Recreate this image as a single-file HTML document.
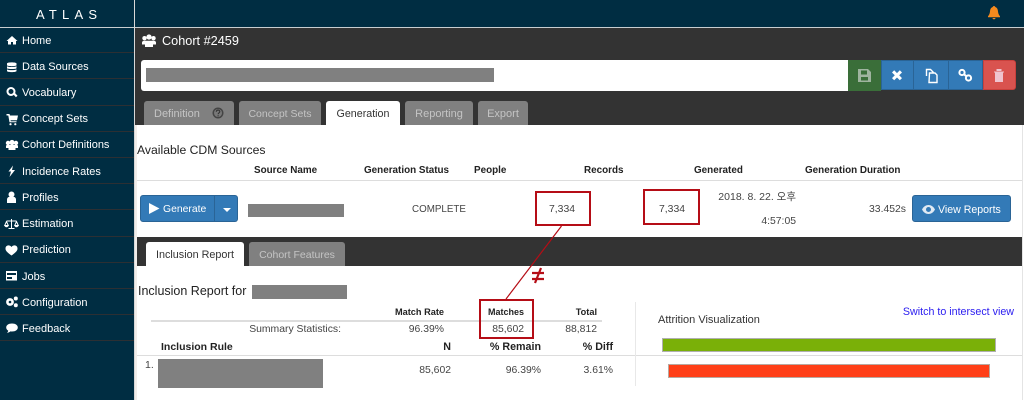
<!DOCTYPE html>
<html><head><meta charset="utf-8">
<style>
html,body{margin:0;padding:0;width:1024px;height:400px;overflow:hidden;background:#fff}
body{position:relative;font-family:"Liberation Sans","Noto Sans CJK KR",sans-serif;font-size:10.4px;color:#333}
.a{position:absolute;white-space:nowrap;line-height:14px}
.b{position:absolute}
.nav{position:absolute;left:22px;color:#fff;font-size:11px;line-height:14px;white-space:nowrap}
.ic{position:absolute}
.sep{position:absolute;left:0;width:134px;height:1px;background:#2c2f33}
.tab{position:absolute;top:101px;height:24px;background:#808080;border-radius:3px 3px 0 0;color:#c4c4c4;font-size:10.5px;line-height:26px;text-align:center}
.g{position:absolute;background:#808080}
.th{position:absolute;white-space:nowrap;font-weight:bold;font-size:9.900px;line-height:14px;color:#222}
.r{text-align:right}
.red{position:absolute;border:2px solid #b50d16;box-sizing:border-box}
</style></head><body>
<div class="b" style="left:0;top:0;width:1024px;height:27px;background:#002d42"></div>
<div class="b" style="left:0;top:27px;width:1024px;height:1px;background:#c8cdd0"></div>
<div class="b" style="left:0;top:28px;width:134px;height:372px;background:#002d42"></div>
<div class="b" style="left:134px;top:0;width:1px;height:400px;background:#d8d8d8"></div>
<div class="b" style="left:135px;top:125px;width:2px;height:275px;background:#f1edea"></div>
<div class="b" style="left:1022px;top:125px;width:1px;height:275px;background:#e4e4e4"></div>
<div class="a" style="left:36px;top:8px;color:#fff;font-size:13px;letter-spacing:5.2px">ATLAS</div>
<svg class="ic" style="left:987px;top:5px" width="14" height="15" viewBox="0 0 14 15"><path d="M7 1c.8 0 1.200.5 1.200 1C10 2.600 10.800 4 11 6.500c.2 2 .8 3.500 2 4.700v1H1v-1c1.200-1.200 1.800-2.700 2-4.700C3.200 4 4 2.600 5.800 2c0-.5.400-1 1.200-1zM5.500 13h3c0 .8-.7 1.300-1.500 1.300S5.500 13.800 5.500 13z" fill="#f68a1e"/></svg>

<div class="sep" style="top:52px"></div><div class="sep" style="top:78px"></div><div class="sep" style="top:105px"></div><div class="sep" style="top:131px"></div><div class="sep" style="top:157px"></div><div class="sep" style="top:183px"></div><div class="sep" style="top:209px"></div><div class="sep" style="top:236px"></div><div class="sep" style="top:262px"></div><div class="sep" style="top:288px"></div><div class="sep" style="top:314px"></div><div class="sep" style="top:340px"></div>

<div class="nav" style="top:34px">Home</div>
<div class="nav" style="top:60px">Data Sources</div>
<div class="nav" style="top:86px">Vocabulary</div>
<div class="nav" style="top:112px">Concept Sets</div>
<div class="nav" style="top:138px">Cohort Definitions</div>
<div class="nav" style="top:165px">Incidence Rates</div>
<div class="nav" style="top:191px">Profiles</div>
<div class="nav" style="top:217px">Estimation</div>
<div class="nav" style="top:243px">Prediction</div>
<div class="nav" style="top:270px">Jobs</div>
<div class="nav" style="top:296px">Configuration</div>
<div class="nav" style="top:322px">Feedback</div>

<svg class="ic" style="left:0;top:0" width="22" height="340" viewBox="0 0 22 340" fill="#fff">
<path d="M12 36l5.500 5h-1.500v3.500h-3V42h-2v2.500H8V41H6.500z"/>
<path d="M7 63.500c0-1.500 9.500-1.500 9.500 0v1.800c0 1.200-9.500 1.200-9.500 0zM7 66.300c2 1 7.500 1 9.500 0v2c0 1-9.500 1-9.500 0zM7 69.400c2 1 7.500 1 9.500 0V71c0 1.500-9.500 1.500-9.500 0z"/>
<path fill-rule="evenodd" d="M11 87a4.500 4.500 0 1 1 0 9 4.500 4.500 0 0 1 0-9zm0 2a2.500 2.500 0 1 0 0 5 2.500 2.500 0 0 0 0-5z"/><path d="M13.500 94.500l1.500-1.500 2.500 2.800-1.600 1.500z"/>
<path d="M6.500 114H9.500l.5 1.500H18l-1 4.800H10.500l.3 1H16.500v1h-7L8.300 115.500H6.500z"/><circle cx="10.500" cy="124.200" r="1.100"/><circle cx="15.300" cy="124.200" r="1.100"/>
<circle cx="8" cy="143" r="2.200"/><circle cx="12" cy="142.500" r="2.600"/><circle cx="16" cy="143" r="2.200"/><path d="M6 146c0-.9.900-1 1.500-1h9c.6 0 1.500.1 1.500 1v2h-2.500v2h-7v-2H6z"/>
<path d="M13 165.500l-4.500 6h2.500L9.500 177l5.500-7h-3z"/>
<circle cx="11.500" cy="194.500" r="3"/><path d="M7 203v-3.500c0-1.500 1-2.500 2-2.500h5c1 0 2 1 2 2.500v3.500z"/>
<path d="M11 219h1v1.500h4v1h-4v6.500h2.500v1H8.500v-1H11v-6.500H7v-1h4z"/><path d="M6.500 221.500l-1.800 4h3.600zM16.500 221.500l-1.800 4h3.600z" fill="none" stroke="#fff"/><path d="M4.500 225.500h4c0 2.300-4 2.300-4 0zM14.500 225.500h4c0 2.300-4 2.300-4 0z"/>
<path d="M11.500 255.500c-5-3.500-6-5-6-7 0-3.500 4.200-4.200 6-1.500 1.800-2.700 6-2 6 1.500 0 2-1 3.500-6 7z"/>
<path fill-rule="evenodd" d="M6 271h11v9.500H6zM7 273v2h9v-2zM7 277v2h5v-2z"/>
<circle cx="10" cy="302" r="3.900"/><circle cx="10" cy="302" r="1.300" fill="#002d42"/><circle cx="15.800" cy="298.500" r="2"/><circle cx="15.800" cy="305.300" r="2"/>
<path d="M12 323.500c3.500 0 5.800 1.700 5.800 4S15.500 331.500 12 331.500c-.6 0-1.100 0-1.600-.1-1 .9-2.300 1.400-3.400 1.500.7-.7 1.100-1.400 1.200-2.300-1.300-.7-2-1.800-2-3.100 0-2.300 2.300-4 5.800-4z"/>
</svg>

<div class="b" style="left:135px;top:28px;width:889px;height:97px;background:#333"></div>
<svg class="ic" style="left:141px;top:33px" width="16" height="16" viewBox="0 0 16 16" fill="#fff"><circle cx="3.500" cy="5.200" r="2.200"/><circle cx="8" cy="4" r="2.600"/><circle cx="12.500" cy="5.200" r="2.200"/><path d="M1 9.500c0-1 1-1.800 2-1.800h10c1 0 2 .8 2 1.800v2H12v2.500H4v-2.500H1z"/></svg>
<div class="a" style="left:162px;top:34px;color:#fff;font-size:12.700px">Cohort #2459</div>

<div class="b" style="left:141px;top:60px;width:707px;height:31px;background:#fff;border-radius:3px 0 0 3px"></div>
<div class="g" style="left:146px;top:68px;width:348px;height:14px"></div>
<div class="b" style="left:848px;top:60px;width:33px;height:31px;background:#3a6e39"></div>
<div class="b" style="left:881px;top:60px;width:33px;height:30px;background:#337ab7;border:1px solid #2a6496;box-sizing:border-box"></div>
<div class="b" style="left:914px;top:60px;width:35px;height:30px;background:#337ab7;border:1px solid #2a6496;box-sizing:border-box;border-left:0"></div>
<div class="b" style="left:949px;top:60px;width:34px;height:30px;background:#337ab7;border:1px solid #2a6496;box-sizing:border-box;border-left:0"></div>
<div class="b" style="left:983px;top:60px;width:33px;height:30px;background:#d9534f;border:1px solid #c9403c;box-sizing:border-box;border-radius:0 3px 3px 0"></div>
<svg class="ic" style="left:848px;top:60px" width="168" height="31" viewBox="0 0 168 31">
<path fill-rule="evenodd" d="M10 9h10l3 3v10H10zM13 10.500v4h6v-4zM13 17v3.500h7V17z" fill="#9fb49f"/>
<path d="M44 11.500l2.200-2.200 2.800 2.800 2.800-2.800 2.200 2.200-2.800 2.800 2.800 2.800-2.200 2.200-2.800-2.800-2.800 2.800L44 17.100l2.800-2.800z" transform="translate(0 1)" fill="#fff"/>
<path d="M78.500 16V9.500h4l3 3M81.500 13h5.500l2 2v7.500h-8z" fill="none" stroke="#fff" stroke-width="1.400"/>
<circle cx="114" cy="12.500" r="2.600" fill="none" stroke="#fff" stroke-width="2"/><circle cx="120.500" cy="18" r="2.600" fill="none" stroke="#fff" stroke-width="2"/><path d="M116 14.300l2.500 2" stroke="#fff" stroke-width="2"/>
<path d="M146 11.500h10v1h-1v9.500h-8v-9.500h-1zM148.500 9h5v2h-5z" fill="#efc4cf"/>
</svg>

<div class="tab" style="left:144px;top:101px;width:90px;text-align:left;text-indent:10px;font-size:11px">Definition<svg style="position:absolute;left:68px;top:6px" width="12" height="12" viewBox="0 0 12 12"><circle cx="6" cy="6" r="5.500" fill="#444"/><circle cx="6" cy="6" r="4" fill="#777"/><path d="M4.300 4.800c0-2.300 3.500-2.300 3.500-.2 0 1.300-1.700 1.400-1.700 2.600M6.100 8.200v1.200" fill="none" stroke="#333" stroke-width="1.100"/></svg></div>
<div class="tab" style="left:239px;width:82px">Concept Sets</div>
<div class="tab" style="left:326px;width:74px;background:#fff;color:#333;font-size:10.700px">Generation</div>
<div class="tab" style="left:405px;width:68px;font-size:11px">Reporting</div>
<div class="tab" style="left:478px;width:50px;font-size:11px">Export</div>

<div class="a" style="left:137px;top:143px;font-size:12.200px;color:#222">Available CDM Sources</div>
<div class="th" style="left:254px;top:164px">Source Name</div>
<div class="th" style="left:364px;top:164px">Generation Status</div>
<div class="th" style="left:474px;top:164px">People</div>
<div class="th" style="left:584px;top:164px">Records</div>
<div class="th" style="left:694px;top:164px">Generated</div>
<div class="th" style="left:805px;top:164px">Generation Duration</div>
<div class="b" style="left:137px;top:180px;width:885px;height:1px;background:#ddd"></div>

<div class="b" style="left:140px;top:195px;width:75px;height:27px;background:#337ab7;border:1px solid #2a6496;box-sizing:border-box;border-radius:3px 0 0 3px"></div>
<div class="b" style="left:215px;top:195px;width:23px;height:27px;background:#337ab7;border:1px solid #2a6496;box-sizing:border-box;border-left:0;border-radius:0 3px 3px 0"></div>
<svg class="ic" style="left:149px;top:203px" width="11" height="11" viewBox="0 0 11 11"><path d="M0 0l10.500 5.500L0 11z" fill="#fff"/></svg>
<div class="a" style="left:163px;top:203px;color:#fff;font-size:10.400px">Generate</div>
<svg class="ic" style="left:223px;top:208px" width="8" height="4"><path d="M0 0h8L4 4z" fill="#fff"/></svg>
<div class="g" style="left:248px;top:204px;width:96px;height:13px"></div>
<div class="a" style="left:412px;top:203px;color:#444;font-size:9.800px">COMPLETE</div>
<div class="a" style="left:549px;top:203px;color:#444">7,334</div>
<div class="a" style="left:659px;top:203px;color:#444">7,334</div>
<div class="a r" style="left:700px;top:190px;width:96px;color:#444;font-size:10.500px">2018. 8. 22. 오후</div>
<div class="a r" style="left:740px;top:215px;width:56px;color:#444;font-size:10.400px">4:57:05</div>
<div class="a r" style="left:850px;top:203px;width:56px;color:#444">33.452s</div>
<div class="b" style="left:912px;top:195px;width:99px;height:27px;background:#337ab7;border:1px solid #2a6496;box-sizing:border-box;border-radius:3px"></div>
<svg class="ic" style="left:922px;top:205px" width="13" height="9" viewBox="0 0 13 9"><path fill-rule="evenodd" d="M0 4.500C1.500 1.500 4 0 6.500 0S11.500 1.500 13 4.500C11.500 7.500 9 9 6.500 9S1.500 7.500 0 4.500zM6.500 2a2.500 2.500 0 1 0 0 5 2.500 2.500 0 0 0 0-5z" fill="#dfe9f3"/></svg>
<div class="a" style="left:938px;top:203px;color:#fff;font-size:10.600px">View Reports</div>

<div class="b" style="left:137px;top:237px;width:885px;height:29px;background:#333"></div>
<div class="tab" style="left:146px;top:242px;width:98px;height:24px;background:#fff;color:#333;font-size:10.800px">Inclusion Report</div>
<div class="tab" style="left:249px;top:242px;width:96px;height:24px">Cohort Features</div>

<div class="a" style="left:138px;top:284px;font-size:12.500px;color:#222">Inclusion Report for</div>
<div class="g" style="left:252px;top:285px;width:95px;height:14px"></div>
<div class="th r" style="left:380px;top:305px;width:64px;font-size:9.200px">Match Rate</div>
<div class="th r" style="left:470px;top:305px;width:54px;font-size:9px">Matches</div>
<div class="th r" style="left:550px;top:305px;width:47px;font-size:9.200px">Total</div>
<div class="b" style="left:151px;top:320px;width:451px;height:2px;background:#ddd"></div>
<div class="a r" style="left:220px;top:323px;width:121px;color:#444">Summary Statistics:</div>
<div class="a r" style="left:390px;top:323px;width:54px;color:#444">96.39%</div>
<div class="a r" style="left:470px;top:323px;width:54px;color:#444">85,602</div>
<div class="a r" style="left:540px;top:323px;width:57px;color:#444">88,812</div>
<div class="th" style="left:161px;top:340px;font-size:10.500px">Inclusion Rule</div>
<div class="th r" style="left:400px;top:340px;width:51px;font-size:10.700px">N</div>
<div class="th r" style="left:470px;top:340px;width:71px;font-size:10.700px">% Remain</div>
<div class="th r" style="left:560px;top:340px;width:53px;font-size:10.700px">% Diff</div>
<div class="b" style="left:137px;top:355px;width:885px;height:1px;background:#ddd"></div>
<div class="a" style="left:145px;top:358px;color:#444;font-size:10.500px">1.</div>
<div class="g" style="left:158px;top:359px;width:165px;height:29px"></div>
<div class="a r" style="left:400px;top:364px;width:51px;color:#444">85,602</div>
<div class="a r" style="left:480px;top:364px;width:61px;color:#444">96.39%</div>
<div class="a r" style="left:560px;top:364px;width:53px;color:#444">3.61%</div>

<div class="b" style="left:635px;top:302px;width:1px;height:84px;background:#e8e8e8"></div>
<div class="a" style="left:658px;top:313px;color:#333;font-size:11px">Attrition Visualization</div>
<div class="a r" style="left:870px;top:305px;width:144px;color:#2a1cf0;font-size:10.700px">Switch to intersect view</div>
<div class="b" style="left:662px;top:338px;width:334px;height:14px;background:#7ab008;border:1px solid #b0b0b0;box-sizing:border-box"></div>
<div class="b" style="left:668px;top:364px;width:322px;height:14px;background:#ff3f17;border:1px solid #b8a8a0;box-sizing:border-box"></div>

<div class="red" style="left:535px;top:191px;width:56px;height:35px"></div>
<div class="red" style="left:643px;top:189px;width:57px;height:36px"></div>
<div class="red" style="left:479px;top:299px;width:55px;height:40px"></div>
<svg class="ic" style="left:500px;top:220px" width="70" height="90" viewBox="0 0 70 90"><path d="M61.500 6L6 79" stroke="#b50d16" stroke-width="1.200" fill="none"/><path d="M32 53h12M32 59h12M41 48l-6 15" stroke="#b50d16" stroke-width="2.200" fill="none"/></svg>
</body></html>
